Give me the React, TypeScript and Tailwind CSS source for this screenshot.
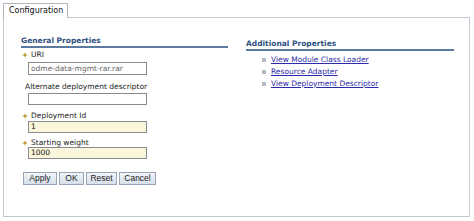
import React from "react";

const font = { fontFamily: '"DejaVu Sans", Verdana, sans-serif' };
const btnFont = { fontFamily: '"Liberation Sans", Tahoma, sans-serif' };

const links = ["View Module Class Loader", "Resource Adapter", "View Deployment Descriptor"];

const buttons = [
  { label: "Apply", w: "w-[34px]" },
  { label: "OK", w: "w-[25px]" },
  { label: "Reset", w: "w-[31px]" },
  { label: "Cancel", w: "w-[37px]" },
];

function Star() {
  return (
    <svg width="6" height="6" viewBox="0 0 6 6" className="shrink-0">
      <path d="M3 0 L3.7 2.3 L6 3 L3.7 3.7 L3 6 L2.3 3.7 L0 3 L2.3 2.3 Z" fill="#b8902c" />
    </svg>
  );
}

export default function App() {
  return (
    <div className="w-[474px] h-[221px] bg-white text-[7.5px] pt-[3px] px-[3px]" style={font}>
      {/* Tab */}
      <div className="flex">
        <div className="w-[65px] h-[15px] border border-b-0 border-[#aeb6c4] bg-white flex items-center pl-[5px] text-[8px] text-[#111] relative z-10 -mb-px">
          Configuration
        </div>
      </div>

      {/* Panel */}
      <div className="w-[467px] h-[200px] border border-[#c3c8d2] flex pt-[18px] pl-[17px]">
        {/* General column */}
        <div className="w-[207px] flex flex-col">
          <div className="font-bold text-[#2e4f7e] border-b-2 border-[#5b7a9d] leading-[10px]">General Properties</div>

          <div className="mt-[1px] h-[11px] flex items-center gap-[3px] pl-[1px]">
            <Star />
            <span className="text-[#222]">URI</span>
          </div>
          <div className="mt-[2px] ml-[7px] w-[119px] h-[13px] border border-[#8a8a8a] bg-white px-[2px] leading-[11px] text-[#666]">
            odme-data-mgmt-rar.rar
          </div>

          <div className="mt-[6px] h-[11px] flex items-center pl-[4px] text-[#222]">Alternate deployment descriptor</div>
          <div className="mt-[1px] ml-[7px] w-[119px] h-[12px] border border-[#8a8a8a] bg-white" />

          <div className="mt-[5px] h-[11px] flex items-center gap-[3px] pl-[1px]">
            <Star />
            <span className="text-[#222]">Deployment Id</span>
          </div>
          <div className="ml-[7px] w-[119px] h-[12px] border border-[#8a8a8a] bg-[#fbf7dd] px-[2px] leading-[10px] text-[#111]">
            1
          </div>

          <div className="mt-[4px] h-[11px] flex items-center gap-[3px] pl-[1px]">
            <Star />
            <span className="text-[#222]">Starting weight</span>
          </div>
          <div className="-mt-[1px] ml-[7px] w-[119px] h-[12px] border border-[#8a8a8a] bg-[#fbf7dd] px-[2px] leading-[10px] text-[#111]">
            1000
          </div>

          <div className="mt-[13px] ml-[2px] flex gap-[2px]">
            {buttons.map((b) => (
              <div
                key={b.label}
                className={`${b.w} h-[13px] flex items-center justify-center border border-[#98a4b4] bg-gradient-to-b from-[#f2f5f9] to-[#d6dfeb] text-[#222] text-[8.5px]`}
                style={btnFont}
              >
                {b.label}
              </div>
            ))}
          </div>
        </div>

        {/* Additional column */}
        <div className="ml-[18px] mt-[3px] w-[208px] flex flex-col">
          <div className="font-bold text-[#2e4f7e] border-b-2 border-[#5b7a9d] leading-[10px]">Additional Properties</div>
          <div className="mt-[4px] ml-[16px] flex flex-col gap-[3px]">
            {links.map((l) => (
              <div key={l} className="flex items-center gap-[5px] h-[9px]">
                <span className="w-[4px] h-[4px] bg-[#b8b8c0]" />
                <span className="text-[#2b2ba8] underline">{l}</span>
              </div>
            ))}
          </div>
        </div>
      </div>
    </div>
  );
}
